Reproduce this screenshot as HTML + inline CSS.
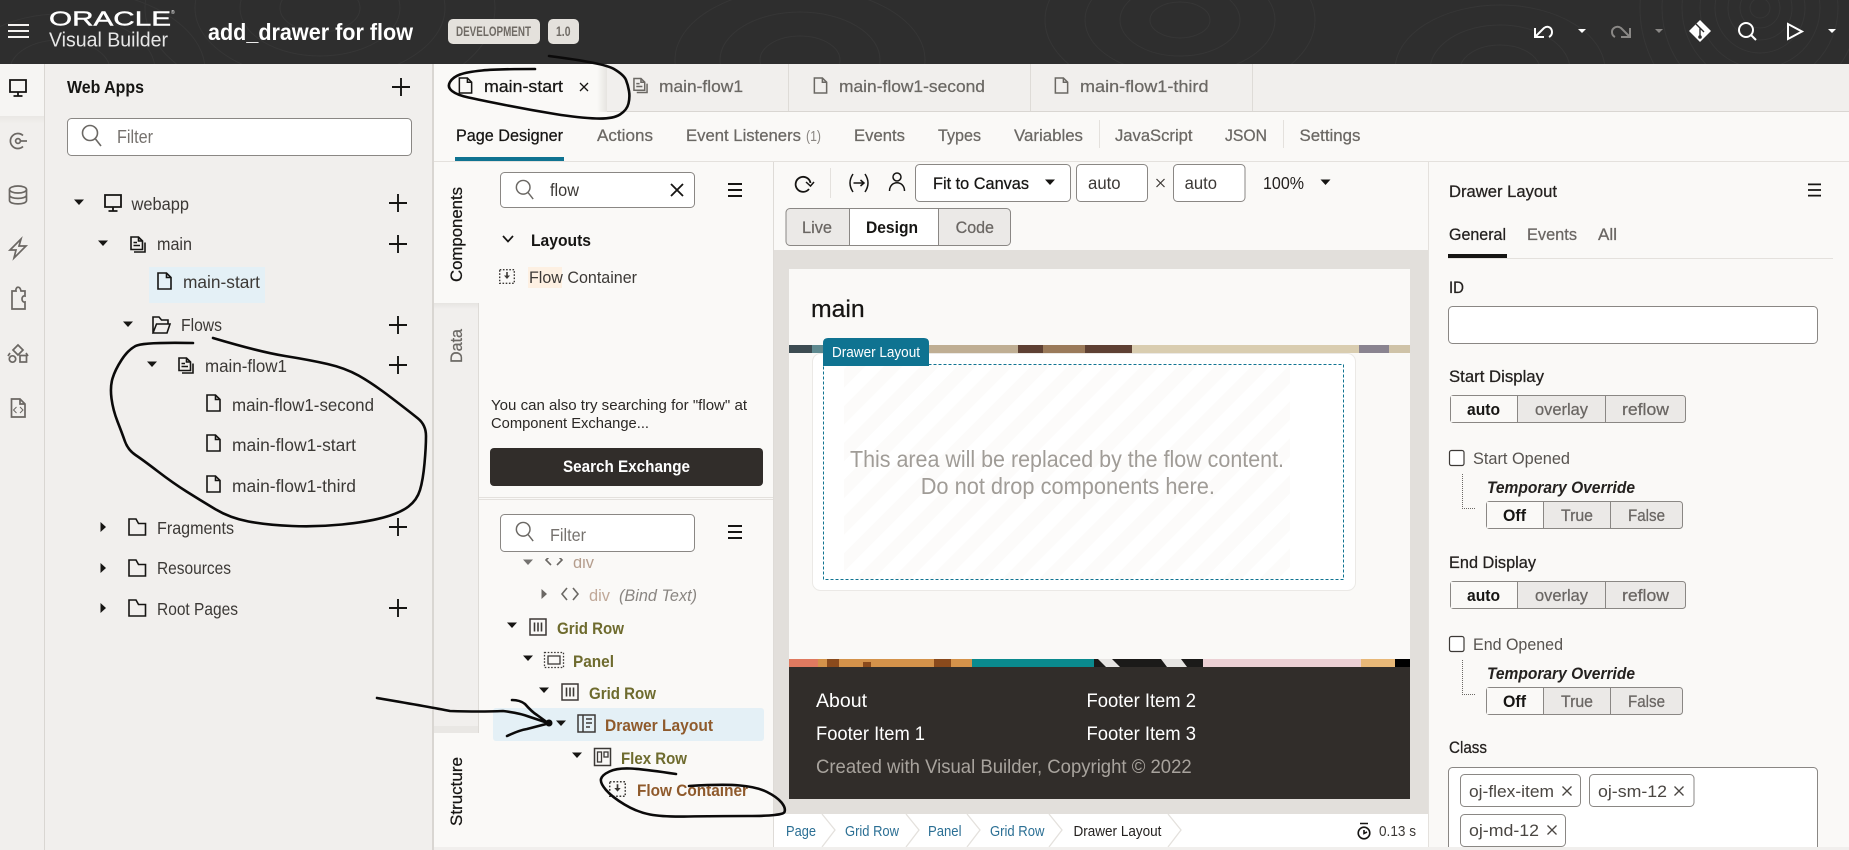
<!DOCTYPE html>
<html lang="en">
<head>
<meta charset="utf-8">
<title>add_drawer for flow - Oracle Visual Builder</title>
<style>
html,body{margin:0;padding:0;width:1849px;height:850px;overflow:hidden;background:#f1efed}
svg{display:block}
text{font-family:"Liberation Sans",sans-serif;white-space:pre;fill:#2b2825}
.b{font-weight:bold}
.m{stroke:currentColor;stroke-width:.25}
.tree{font-size:17.5px;fill:#3c3936}
.sub{font-size:17px;fill:#6b6864;color:#6b6864}
.tab{font-size:17px;fill:#6b6864;color:#6b6864}
.lab{font-size:16.5px;fill:#24211f;color:#24211f}
.seg{font-size:16.500px;fill:#6a6663;color:#6a6663}
.on{font-size:16.500px;fill:#161513;font-weight:bold}
.crumb{font-size:15px;fill:#2b6f94}
.olive{font-size:17px;font-weight:bold;fill:#6e6b2e}
.brown{font-size:17px;font-weight:bold;fill:#8f5a2c}
.foot{font-size:19.500px;fill:#fff}
.ink{fill:none;stroke:#0b0a0a;stroke-width:2.6;stroke-linecap:round;stroke-linejoin:round}
</style>
</head>
<body>
<svg xmlns="http://www.w3.org/2000/svg" width="1849" height="850" viewBox="0 0 1849 850">
<defs>
  <clipPath id="hc"><rect width="1849" height="64"/></clipPath>
  <clipPath id="treeclip"><rect x="478" y="558" width="295" height="289"/></clipPath>
  <clipPath id="classclip"><rect x="1440" y="760" width="400" height="87"/></clipPath>
  <linearGradient id="sh" x1="0" x2="1" y1="0" y2="0"><stop offset="0" stop-color="#faf9f7"/><stop offset="1" stop-color="#e6e4e0"/></linearGradient>
  <linearGradient id="shd" x1="0" x2="0" y1="0" y2="1"><stop offset="0" stop-color="#e6e4e1"/><stop offset="1" stop-color="#f1efed"/></linearGradient>
  <pattern id="hatch" width="26" height="26" patternUnits="userSpaceOnUse" patternTransform="rotate(-45)">
    <rect width="26" height="26" fill="#fff"/><rect width="26" height="13" fill="#fcfbfa"/>
  </pattern>
  <symbol id="doc" viewBox="0 0 15 18" overflow="visible"><path d="M1 1H9.5L14 5.5V17H1Z M9.5 1V5.5H14" fill="none" stroke="currentColor" stroke-width="1.6"/></symbol>
  <symbol id="pages" viewBox="0 0 16 17" overflow="visible"><path d="M1 1H8.5L12.5 5V13.5H1Z M8.5 1V5H12.5 M3.5 6.5H7 M3.5 9.5H10 M15 6.5V16H4" fill="none" stroke="currentColor" stroke-width="1.6"/></symbol>
  <symbol id="folder" viewBox="0 0 18 18" overflow="visible"><path d="M1 1H8L10.5 5.5H17.5V17H1Z" fill="none" stroke="currentColor" stroke-width="1.6"/></symbol>
  <symbol id="folderopen" viewBox="0 0 18 18" overflow="visible"><path d="M1 17V1H7L9.5 4H16V8 M1 17L4.500 8H18L15 17Z" fill="none" stroke="currentColor" stroke-width="1.6"/></symbol>
  <symbol id="mon" viewBox="0 0 18 18" overflow="visible"><path d="M1 1H17V13H1Z M9 13V17 M4.5 17H13.5" fill="none" stroke="currentColor" stroke-width="1.8"/></symbol>
  <symbol id="plus" viewBox="-10 -10 20 20" overflow="visible"><path d="M-9 0H9 M0 -9V9" fill="none" stroke="#161513" stroke-width="1.9"/></symbol>
  <symbol id="dn" viewBox="-5 -3 10 6" overflow="visible"><path d="M-5 -2.5H5L0 3Z" fill="currentColor"/></symbol>
  <symbol id="rt" viewBox="-3 -5 6 10" overflow="visible"><path d="M-2.5 -5V5L3 0Z" fill="currentColor"/></symbol>
  <symbol id="srch" viewBox="0 0 22 24" overflow="visible"><circle cx="9" cy="9" r="7.5" fill="none" stroke="#6b6864" stroke-width="1.6"/><path d="M14.500 15L20 22" stroke="#6b6864" stroke-width="1.6" fill="none"/></symbol>
  <symbol id="burger" viewBox="0 0 14 14" overflow="visible"><path d="M0 1H14 M0 7H14 M0 13H14" stroke="#161513" stroke-width="1.9" fill="none"/></symbol>
  <symbol id="gridi" viewBox="0 0 18 18" overflow="visible"><path d="M1 1H17V17H1Z" fill="none" stroke="#3c3936" stroke-width="1.5"/><path d="M5.500 4.500V13.500 M9 4.500V13.500 M12.500 4.500V13.500" stroke="#3c3936" stroke-width="1.6" fill="none"/></symbol>
  <symbol id="flowi" viewBox="0 0 16 15" overflow="visible"><rect x=".7" y=".7" width="14.6" height="13.6" fill="none" stroke="#3c3936" stroke-width="1.4" stroke-dasharray="1.6 1.6"/><path d="M8 3V7" stroke="#3c3936" stroke-width="1.6"/><path d="M5 6.500H11L8 10Z" fill="#3c3936"/></symbol>
</defs>

<!-- base -->
<rect width="1849" height="850" fill="#f1efed"/>

<!-- HEADER -->
<g clip-path="url(#hc)">
  <rect width="1849" height="64" fill="#2e2e2e"/>
  <g fill="none" stroke="#363636" stroke-width="1">
    <circle cx="1760" cy="8" r="10"/><circle cx="1760" cy="8" r="20"/><circle cx="1760" cy="8" r="32"/><circle cx="1760" cy="8" r="45"/><circle cx="1760" cy="8" r="60"/><circle cx="1760" cy="8" r="78"/><circle cx="1760" cy="8" r="98"/><circle cx="1760" cy="8" r="120"/>
    <ellipse cx="1500" cy="70" rx="40" ry="25"/><ellipse cx="1500" cy="70" rx="70" ry="45"/><ellipse cx="1500" cy="70" rx="105" ry="65"/>
    <ellipse cx="1180" cy="20" rx="30" ry="18"/><ellipse cx="1180" cy="20" rx="60" ry="36"/><ellipse cx="1180" cy="20" rx="95" ry="55"/><ellipse cx="1180" cy="20" rx="135" ry="78"/>
    <ellipse cx="800" cy="60" rx="40" ry="24"/><ellipse cx="800" cy="60" rx="80" ry="48"/><ellipse cx="800" cy="60" rx="125" ry="72"/>
    <ellipse cx="320" cy="8" rx="40" ry="24"/><ellipse cx="320" cy="8" rx="80" ry="48"/><ellipse cx="320" cy="8" rx="125" ry="72"/><ellipse cx="320" cy="8" rx="175" ry="98"/>
    <ellipse cx="60" cy="70" rx="50" ry="30"/><ellipse cx="60" cy="70" rx="95" ry="56"/><ellipse cx="60" cy="70" rx="145" ry="82"/>
  </g>
</g>
<path d="M8 25H29 M8 31H29 M8 37H29" stroke="#f4f2f0" stroke-width="2" fill="none"/>
<text x="49" y="25.500" font-size="20" textLength="122" lengthAdjust="spacingAndGlyphs" style="fill:#fff;stroke:#fff;stroke-width:.4">ORACLE</text>
<text x="171" y="14" font-size="5" style="fill:#fff">®</text>
<text x="49" y="46.500" font-size="20.500" textLength="119" lengthAdjust="spacingAndGlyphs" style="fill:#e6e6e6">Visual Builder</text>
<text x="208" y="40" font-size="23.500" class="b" textLength="205" lengthAdjust="spacingAndGlyphs" style="fill:#fff">add_drawer for flow</text>
<rect x="448" y="19" width="92" height="25" rx="5" fill="#e4e1dc"/>
<text x="456" y="36" font-size="13.500" class="b" textLength="75" lengthAdjust="spacingAndGlyphs" style="fill:#6f6a64">DEVELOPMENT</text>
<rect x="548" y="19" width="31" height="25" rx="5" fill="#e4e1dc"/>
<text x="556" y="36" font-size="13.500" class="b" textLength="14.500" lengthAdjust="spacingAndGlyphs" style="fill:#6f6a64">1.0</text>
<!-- header right icons -->
<g fill="none" stroke="#fff" stroke-width="2">
  <path d="M1535 28V37H1544 M1535 37L1544 28C1548 25 1552 28 1552 32C1552 34 1551 36 1549 37"/>
  <g stroke="#8a8886"><path d="M1630 28V37H1621 M1630 37L1621 28C1617 25 1612 28 1612 32C1612 34 1613 36 1615 37"/></g>
  <circle cx="1746" cy="30" r="7"/><path d="M1751 35L1756 40"/>
  <path d="M1788 24V39L1802 31.500Z"/>
</g>
<path d="M1578 29H1586L1582 33Z" fill="#fff"/>
<path d="M1655 29H1663L1659 33Z" fill="#8a8886"/>
<path d="M1828 29H1836L1832 33Z" fill="#fff"/>
<path d="M1700 20L1711 31L1700 42L1689 31Z" fill="#fff"/>
<path d="M1696 24L1700 28V37 M1700 28L1704 32" stroke="#2e2e2e" stroke-width="1.400" fill="none"/>
<circle cx="1700" cy="37" r="1.800" fill="#2e2e2e"/>

<!-- LEFT RAIL -->
<rect x="0" y="64" width="44" height="52" fill="#f6f5f3"/>
<rect x="0" y="116" width="44" height="8" fill="url(#shd)" opacity=".7"/>
<rect x="44" y="64" width="1" height="786" fill="#d9d6d2"/>
<g color="#161513"><use href="#mon" x="9" y="79" width="18" height="18"/></g>
<g fill="none" stroke="#6b6763" stroke-width="1.700">
  <path d="M23 135.500A7.500 7.500 0 1 0 23 146.500"/><circle cx="18" cy="141" r="2.400"/><path d="M20.500 141H27"/>
  <ellipse cx="18" cy="189.500" rx="8.500" ry="3.500"/><path d="M9.500 189.500V200.500C9.500 205 26.500 205 26.500 200.500V189.500 M9.500 195C9.500 199.500 26.500 199.500 26.500 195"/>
  <path d="M21 239L10 250H16L14 258L26 246H19Z"/>
  <path d="M12 291H16C15 287 20 285 21 291H25V296C21 295 21 303 25 302V309H12Z"/>
  <path d="M18 345L23 350L18 355L13 350Z M10 353L8 356 M26 353L28 356"/>
  <circle cx="12.500" cy="359" r="3.200"/><rect x="20" y="355.500" width="6.500" height="6.500"/>
  <path d="M11.500 399H20L25 404V417H11.500Z M20 399V404H25"/>
</g>
<path d="M16.500 407L13.500 410L16.500 413 M20 407L23 410L20 413" fill="none" stroke="#6b6763" stroke-width="1"/>

<!-- WEB APPS PANEL -->
<rect x="432" y="64" width="2" height="786" fill="#d9d6d2"/>
<text x="67" y="93" font-size="17.500" class="b" textLength="77" lengthAdjust="spacingAndGlyphs" style="fill:#161513">Web Apps</text>
<use href="#plus" x="391" y="77" width="20" height="20"/>
<rect x="67.500" y="118.500" width="344" height="37" rx="4" fill="#fff" stroke="#8a8784"/>
<use href="#srch" x="81" y="124" width="22" height="24"/>
<text x="117" y="143" font-size="18" textLength="36" lengthAdjust="spacingAndGlyphs" style="fill:#76726e">Filter</text>

<!-- tree -->
<g color="#161513">
  <use href="#dn" x="74" y="199" width="10" height="6"/>
  <use href="#dn" x="98" y="240" width="10" height="6"/>
  <use href="#dn" x="123" y="321" width="10" height="6"/>
  <use href="#dn" x="147" y="361" width="10" height="6"/>
  <use href="#rt" x="100" y="522" width="6" height="10"/>
  <use href="#rt" x="100" y="563" width="6" height="10"/>
  <use href="#rt" x="100" y="603" width="6" height="10"/>
  <use href="#mon" x="104" y="194" width="18" height="18"/>
  <use href="#pages" x="130" y="236" width="16" height="17"/>
  <rect x="149" y="267" width="116" height="36" fill="#e4f0f6"/>
  <use href="#doc" x="157" y="272" width="15" height="18"/>
  <use href="#folderopen" x="152" y="316" width="18" height="18"/>
  <use href="#pages" x="178" y="357" width="16" height="17"/>
  <use href="#doc" x="206" y="394" width="15" height="18"/>
  <use href="#doc" x="206" y="434" width="15" height="18"/>
  <use href="#doc" x="206" y="475" width="15" height="18"/>
  <use href="#folder" x="128" y="518" width="18" height="18"/>
  <use href="#folder" x="128" y="559" width="18" height="18"/>
  <use href="#folder" x="128" y="599" width="18" height="18"/>
</g>
<text class="tree" x="131.500" y="210" textLength="57.500" lengthAdjust="spacingAndGlyphs">webapp</text>
<text class="tree" x="157" y="250" textLength="35" lengthAdjust="spacingAndGlyphs">main</text>
<text class="tree" x="183" y="288" textLength="77" lengthAdjust="spacingAndGlyphs">main-start</text>
<text class="tree" x="181" y="331" textLength="41" lengthAdjust="spacingAndGlyphs">Flows</text>
<text class="tree" x="205" y="372" textLength="82" lengthAdjust="spacingAndGlyphs">main-flow1</text>
<text class="tree" x="232" y="411" textLength="142" lengthAdjust="spacingAndGlyphs">main-flow1-second</text>
<text class="tree" x="232" y="451" textLength="124" lengthAdjust="spacingAndGlyphs">main-flow1-start</text>
<text class="tree" x="232" y="492" textLength="124" lengthAdjust="spacingAndGlyphs">main-flow1-third</text>
<text class="tree" x="157" y="534" textLength="77" lengthAdjust="spacingAndGlyphs">Fragments</text>
<text class="tree" x="157" y="574" textLength="74" lengthAdjust="spacingAndGlyphs">Resources</text>
<text class="tree" x="157" y="615" textLength="81" lengthAdjust="spacingAndGlyphs">Root Pages</text>
<use href="#plus" x="388" y="193" width="20" height="20"/>
<use href="#plus" x="388" y="234" width="20" height="20"/>
<use href="#plus" x="388" y="315" width="20" height="20"/>
<use href="#plus" x="388" y="355" width="20" height="20"/>
<use href="#plus" x="388" y="517" width="20" height="20"/>
<use href="#plus" x="388" y="598" width="20" height="20"/>

<!-- TABS -->
<rect x="434" y="64" width="1415" height="47" fill="#f1efed"/>
<rect x="434" y="64" width="173" height="48" fill="#faf9f7"/>
<rect x="597" y="64" width="10" height="48" fill="url(#sh)"/>
<rect x="607" y="111" width="1242" height="1" fill="#d9d6d2"/>
<rect x="788" y="64" width="1" height="47" fill="#dedbd7"/>
<rect x="1030" y="64" width="1" height="47" fill="#dedbd7"/>
<rect x="1252" y="64" width="1" height="47" fill="#dedbd7"/>
<g color="#161513"><use href="#doc" x="458" y="77" width="15" height="17"/></g>
<text x="484" y="92" font-size="17" class="m" textLength="79" lengthAdjust="spacingAndGlyphs" style="fill:#161513;color:#161513">main-start</text>
<path d="M580 83L588 91 M588 83L580 91" stroke="#161513" stroke-width="1.300"/>
<g color="#6b6864">
  <use href="#pages" x="633" y="77" width="15" height="17"/>
  <use href="#doc" x="813" y="77" width="15" height="17"/>
  <use href="#doc" x="1054" y="77" width="15" height="17"/>
</g>
<text class="tab m" x="659" y="92" textLength="84" lengthAdjust="spacingAndGlyphs">main-flow1</text>
<text class="tab m" x="839" y="92" textLength="146" lengthAdjust="spacingAndGlyphs">main-flow1-second</text>
<text class="tab m" x="1080" y="92" textLength="128.500" lengthAdjust="spacingAndGlyphs">main-flow1-third</text>

<!-- SUBTABS -->
<rect x="434" y="112" width="1415" height="50" fill="#faf9f7"/>
<rect x="434" y="161" width="1415" height="1" fill="#e4e1dd"/>
<rect x="455" y="157" width="109" height="4" fill="#0f7391"/>
<text x="456" y="141" font-size="17" class="m" textLength="107" lengthAdjust="spacingAndGlyphs" style="fill:#161513;color:#161513">Page Designer</text>
<text class="sub m" x="597" y="141" textLength="56" lengthAdjust="spacingAndGlyphs">Actions</text>
<text class="sub m" x="686" y="141" textLength="115" lengthAdjust="spacingAndGlyphs">Event Listeners</text>
<text x="806" y="141" font-size="14.500" textLength="15" lengthAdjust="spacingAndGlyphs" style="fill:#8a8682">(1)</text>
<text class="sub m" x="854" y="141" textLength="51" lengthAdjust="spacingAndGlyphs">Events</text>
<text class="sub m" x="938" y="141" textLength="43" lengthAdjust="spacingAndGlyphs">Types</text>
<text class="sub m" x="1014" y="141" textLength="69" lengthAdjust="spacingAndGlyphs">Variables</text>
<text class="sub m" x="1115" y="141" textLength="77.500" lengthAdjust="spacingAndGlyphs">JavaScript</text>
<text class="sub m" x="1225" y="141" textLength="42" lengthAdjust="spacingAndGlyphs">JSON</text>
<text class="sub m" x="1299.500" y="141" textLength="61" lengthAdjust="spacingAndGlyphs">Settings</text>
<rect x="1099" y="120" width="1" height="28" fill="#e4e1dd"/>
<rect x="1283" y="120" width="1" height="28" fill="#e4e1dd"/>

<!-- VERTICAL TABS -->
<rect x="434" y="162" width="45" height="141" fill="#faf9f7"/>
<rect x="434" y="303" width="45" height="430" fill="#f1efed"/>
<rect x="434" y="303" width="45" height="6" fill="url(#shd)"/>
<rect x="434" y="726" width="45" height="7" fill="#e9e7e4"/>
<rect x="434" y="733" width="45" height="114" fill="#faf9f7"/>
<rect x="478" y="303" width="1" height="430" fill="#dedbd7"/>
<text transform="translate(462,282) rotate(-90)" font-size="17" class="m" textLength="95" lengthAdjust="spacingAndGlyphs" style="fill:#161513;color:#161513">Components</text>
<text transform="translate(462,363) rotate(-90)" font-size="17" class="m" textLength="34" lengthAdjust="spacingAndGlyphs" style="fill:#6b6864;color:#6b6864">Data</text>
<text transform="translate(462,826) rotate(-90)" font-size="17" class="m" textLength="69" lengthAdjust="spacingAndGlyphs" style="fill:#161513;color:#161513">Structure</text>

<!-- COMPONENTS PANEL -->
<rect x="479" y="162" width="294" height="685" fill="#faf9f7"/>
<rect x="773" y="162" width="1" height="685" fill="#dedbd7"/>
<rect x="500.500" y="172.500" width="194" height="35" rx="4" fill="#fff" stroke="#8a8784"/>
<use href="#srch" x="515" y="179" width="20" height="22"/>
<text x="550" y="196" font-size="17.500" textLength="29" lengthAdjust="spacingAndGlyphs" style="fill:#3c3936">flow</text>
<path d="M671 184L683 196 M683 184L671 196" stroke="#161513" stroke-width="1.800"/>
<use href="#burger" x="728" y="183" width="14" height="14"/>
<path d="M503 236L508 241.500L513 236" fill="none" stroke="#161513" stroke-width="1.700"/>
<text x="531" y="246" font-size="17" class="b" textLength="60" lengthAdjust="spacingAndGlyphs" style="fill:#161513">Layouts</text>
<use href="#flowi" x="499" y="269" width="16" height="15"/>
<rect x="528" y="267" width="34" height="21" fill="#fdf0e2"/>
<text x="529" y="283" font-size="17" textLength="108" lengthAdjust="spacingAndGlyphs" style="fill:#3c3936">Flow Container</text>
<text x="491" y="410" font-size="15" textLength="256" lengthAdjust="spacingAndGlyphs">You can also try searching for "flow" at</text>
<text x="491" y="428" font-size="15" textLength="158" lengthAdjust="spacingAndGlyphs">Component Exchange...</text>
<rect x="490" y="448" width="273" height="38" rx="4" fill="#312d2a"/>
<text x="563" y="472" font-size="17" class="b" textLength="127" lengthAdjust="spacingAndGlyphs" style="fill:#fff">Search Exchange</text>
<rect x="479" y="497" width="294" height="1" fill="#e4e1dd"/>
<rect x="479" y="499" width="294" height="1" fill="#e4e1dd"/>
<g clip-path="url(#treeclip)">
  <g color="#3c3936"><use href="#dn" x="523" y="559" width="10" height="6" opacity=".7"/></g>
  <path d="M551 555L546 560L551 565 M557 555L562 560L557 565" fill="none" stroke="#6b6864" stroke-width="1.600"/>
  <text x="573" y="568" font-size="17" textLength="21" lengthAdjust="spacingAndGlyphs" style="fill:#b59e8e">div</text>
</g>
<rect x="500.500" y="514.500" width="194" height="37" rx="4" fill="#fff" stroke="#8a8784"/>
<use href="#srch" x="515" y="521" width="20" height="22"/>
<text x="550" y="541" font-size="17.500" textLength="36" lengthAdjust="spacingAndGlyphs" style="fill:#76726e">Filter</text>
<use href="#burger" x="728" y="525" width="14" height="14"/>
<!-- structure tree -->
<rect x="493" y="708" width="271" height="33" rx="3" fill="#e4f0f6"/>
<g color="#161513">
  <g color="#6b6864"><use href="#rt" x="541" y="589" width="6" height="10"/></g>
  <use href="#dn" x="507" y="622" width="10" height="6"/>
  <use href="#dn" x="523" y="655" width="10" height="6"/>
  <use href="#dn" x="539" y="687" width="10" height="6"/>
  <use href="#dn" x="556" y="720" width="10" height="6"/>
  <use href="#dn" x="572" y="752" width="10" height="6"/>
</g>
<path d="M567 588L562 594L567 600 M573 588L578 594L573 600" fill="none" stroke="#6b6864" stroke-width="1.600"/>
<text x="589" y="601" font-size="17" textLength="21" lengthAdjust="spacingAndGlyphs" style="fill:#c0a898">div</text>
<text x="619" y="601" font-size="17" font-style="italic" textLength="78" lengthAdjust="spacingAndGlyphs" style="fill:#8a8682">(Bind Text)</text>
<use href="#gridi" x="529" y="618" width="18" height="18"/>
<text class="olive" x="557" y="634" textLength="67" lengthAdjust="spacingAndGlyphs">Grid Row</text>
<rect x="544.500" y="652.500" width="19" height="15" fill="none" stroke="#3c3936" stroke-width="1.300" stroke-dasharray="1.600 1.600"/>
<rect x="548" y="656" width="12" height="8" fill="none" stroke="#3c3936" stroke-width="1.300"/>
<text class="olive" x="573" y="667" textLength="41" lengthAdjust="spacingAndGlyphs">Panel</text>
<use href="#gridi" x="561" y="683" width="18" height="18"/>
<text class="olive" x="589" y="699" textLength="67" lengthAdjust="spacingAndGlyphs">Grid Row</text>
<path d="M578 715H595V732H578Z M583 715V732 M586 719H592 M586 723H592 M586 727H590" fill="none" stroke="#3c3936" stroke-width="1.500"/>
<text class="brown" x="605" y="731" textLength="108" lengthAdjust="spacingAndGlyphs">Drawer Layout</text>
<path d="M594.500 748.500H610.500V765.500H594.500Z" fill="none" stroke="#3c3936" stroke-width="1.500"/>
<rect x="597.500" y="752" width="4" height="10" fill="none" stroke="#3c3936" stroke-width="1.300"/>
<rect x="604" y="752" width="4" height="5" fill="none" stroke="#3c3936" stroke-width="1.300"/>
<text class="olive" x="621" y="764" textLength="66" lengthAdjust="spacingAndGlyphs">Flex Row</text>
<use href="#flowi" x="609" y="781" width="17" height="16"/>
<text class="brown" x="637" y="796" textLength="111" lengthAdjust="spacingAndGlyphs">Flow Container</text>

<!-- TOOLBAR -->
<rect x="774" y="162" width="654" height="88" fill="#faf9f7"/>
<g fill="none" stroke="#161513" stroke-width="1.800">
  <path d="M809 189A7.500 7.500 0 1 1 810.500 183"/>
  <path d="M806 182L810.500 186L814 182" stroke-width="1.500"/>
  <path d="M853 174C849 180 849 186 853 192 M865 174C869 180 869 186 865 192" stroke-width="1.500"/>
  <path d="M853.500 183H864 M860.500 180L864 183L860.500 186" stroke-width="1.500"/>
  <circle cx="897" cy="177" r="4" stroke-width="1.500"/>
  <path d="M889.500 191C889.500 180 904.500 180 904.500 191" stroke-width="1.500"/>
</g>
<rect x="830" y="168" width="1" height="30" fill="#e4e1dd"/>
<rect x="915.500" y="164.500" width="155" height="37" rx="4" fill="#fff" stroke="#8a8784"/>
<text x="933" y="189" font-size="17" class="m" textLength="96" lengthAdjust="spacingAndGlyphs" style="fill:#161513;color:#161513">Fit to Canvas</text>
<path d="M1045 179.500H1055L1050 185Z" fill="#161513"/>
<rect x="1076.500" y="164.500" width="71" height="37" rx="4" fill="#fff" stroke="#8a8784"/>
<text x="1088" y="189" font-size="17.500" textLength="32.600" lengthAdjust="spacingAndGlyphs" style="fill:#3c3936">auto</text>
<path d="M1156.500 179L1164.500 187 M1164.500 179L1156.500 187" stroke="#3c3936" stroke-width="1.200"/>
<rect x="1173.500" y="164.500" width="71.500" height="37" rx="4" fill="#fff" stroke="#8a8784"/>
<text x="1184.600" y="189" font-size="17.500" textLength="32.400" lengthAdjust="spacingAndGlyphs" style="fill:#3c3936">auto</text>
<text x="1263" y="189" font-size="17.500" textLength="41" lengthAdjust="spacingAndGlyphs" style="fill:#24211f">100%</text>
<path d="M1320.500 179.500H1330.500L1325.500 185Z" fill="#161513"/>
<!-- Live/Design/Code -->
<rect x="786" y="208.500" width="224.500" height="37" rx="4" fill="#ebe9e7" stroke="#8a8784"/>
<rect x="849.500" y="209" width="89" height="36" fill="#fff"/>
<path d="M849.500 208.500V245.500 M938.500 208.500V245.500" stroke="#8a8784" fill="none"/>
<text x="802" y="233" font-size="17" class="m" textLength="30" lengthAdjust="spacingAndGlyphs" style="fill:#6a6663;color:#6a6663">Live</text>
<text x="866" y="233" font-size="17" class="b" textLength="52" lengthAdjust="spacingAndGlyphs" style="fill:#161513">Design</text>
<text x="955.600" y="233" font-size="17" class="m" textLength="38.400" lengthAdjust="spacingAndGlyphs" style="fill:#6a6663;color:#6a6663">Code</text>

<!-- CANVAS -->
<rect x="774" y="250" width="654" height="564" fill="#e2dfdb"/>
<rect x="789" y="269" width="621" height="398" fill="#faf9f7"/>
<text x="811" y="317" font-size="24" class="m" textLength="53.700" lengthAdjust="spacingAndGlyphs" style="fill:#161513;color:#161513">main</text>
<!-- upper banner -->
<rect x="789" y="345" width="23" height="8" fill="#3d4c52"/>
<rect x="812" y="345" width="11" height="8" fill="#5f8a90"/>
<rect x="929" y="345" width="89" height="8" fill="#bfae93"/>
<rect x="1018" y="345" width="25" height="8" fill="#5e4033"/>
<rect x="1043" y="345" width="42" height="8" fill="#9a7a5a"/>
<rect x="1085" y="345" width="47" height="8" fill="#5e4033"/>
<rect x="1132" y="345" width="227" height="8" fill="#d9cdb0"/>
<rect x="1359" y="345" width="30" height="8" fill="#8a8490"/>
<rect x="1389" y="345" width="21" height="8" fill="#cfc3a8"/>
<!-- drawer card -->
<rect x="812.500" y="353.500" width="543" height="237" rx="8" fill="#fff" stroke="#ebe9e6"/>
<rect x="844" y="364" width="446" height="215" fill="url(#hatch)"/>
<rect x="823.500" y="364.500" width="520" height="215" fill="none" stroke="#0f7391" stroke-dasharray="3 2"/>
<path d="M823 366V343Q823 338 828 338H924Q929 338 929 343V366Z" fill="#0f7391"/>
<text x="832" y="357" font-size="14.500" textLength="88" lengthAdjust="spacingAndGlyphs" style="fill:#fff">Drawer Layout</text>
<text x="850" y="467" font-size="23" textLength="434" lengthAdjust="spacingAndGlyphs" style="fill:#a09c97">This area will be replaced by the flow content.</text>
<text x="920.700" y="494" font-size="23" textLength="294.300" lengthAdjust="spacingAndGlyphs" style="fill:#a09c97">Do not drop components here.</text>
<!-- lower banner -->
<rect x="789" y="659" width="29" height="8" fill="#e07a60"/>
<rect x="818" y="659" width="154" height="8" fill="#d4924a"/>
<rect x="827" y="659" width="12" height="8" fill="#8a4a1c"/>
<rect x="863" y="662" width="8" height="5" fill="#8a4a1c"/>
<rect x="934" y="659" width="17" height="8" fill="#8a4a1c"/>
<rect x="972" y="659" width="122" height="8" fill="#0a8a8e"/>
<rect x="1094" y="659" width="109" height="8" fill="#1b1a19"/>
<path d="M1098 659H1112L1120 667H1106Z M1161 659H1181L1187 667H1167Z" fill="#e6e4e2"/>
<rect x="1203" y="659" width="158" height="8" fill="#ecd0d4"/>
<rect x="1361" y="659" width="34" height="8" fill="#e8b878"/>
<rect x="1395" y="659" width="15" height="8" fill="#000"/>
<!-- footer -->
<rect x="789" y="667" width="621" height="132" fill="#312d2a"/>
<text class="foot" x="816" y="707" textLength="51" lengthAdjust="spacingAndGlyphs">About</text>
<text class="foot" x="816" y="740" textLength="109" lengthAdjust="spacingAndGlyphs">Footer Item 1</text>
<text class="foot" x="1086.500" y="707" textLength="109.500" lengthAdjust="spacingAndGlyphs">Footer Item 2</text>
<text class="foot" x="1086.500" y="740" textLength="109.500" lengthAdjust="spacingAndGlyphs">Footer Item 3</text>
<text x="816" y="773" font-size="19.500" textLength="375.700" lengthAdjust="spacingAndGlyphs" style="fill:#a8a39d">Created with Visual Builder, Copyright © 2022</text>

<!-- BREADCRUMB -->
<rect x="774" y="814" width="654" height="33" fill="#fff"/>
<g fill="none" stroke="#e4e1dd" stroke-width="1.300">
  <path d="M822 814L835 830L822 847 M906 814L919 830L906 847 M967 814L980 830L967 847 M1049 814L1062 830L1049 847 M1168 814L1181 830L1168 847"/>
</g>
<text class="crumb" x="786" y="836" textLength="30" lengthAdjust="spacingAndGlyphs">Page</text>
<text class="crumb" x="845" y="836" textLength="54" lengthAdjust="spacingAndGlyphs">Grid Row</text>
<text class="crumb" x="928" y="836" textLength="33.500" lengthAdjust="spacingAndGlyphs">Panel</text>
<text class="crumb" x="990" y="836" textLength="54.400" lengthAdjust="spacingAndGlyphs">Grid Row</text>
<text x="1073.500" y="836" font-size="15" textLength="87.900" lengthAdjust="spacingAndGlyphs" style="fill:#24211f">Drawer Layout</text>
<g fill="none" stroke="#161513" stroke-width="1.600"><circle cx="1364" cy="833" r="5.800"/><path d="M1360 823.500H1368 M1364 830V833.500L1367 832"/></g>
<text x="1379" y="836" font-size="15" textLength="37" lengthAdjust="spacingAndGlyphs" style="fill:#3c3936">0.13 s</text>

<!-- PROPERTY PANEL -->
<rect x="1428" y="162" width="421" height="685" fill="#faf9f7"/>
<rect x="1428" y="162" width="1" height="685" fill="#e4e1dd"/>
<text class="lab m" x="1449" y="197" textLength="108" lengthAdjust="spacingAndGlyphs">Drawer Layout</text>
<use href="#burger" x="1808" y="183" width="13" height="14"/>
<text class="lab m" x="1449" y="240" textLength="57" lengthAdjust="spacingAndGlyphs">General</text>
<text class="seg m" x="1527" y="240" textLength="50" lengthAdjust="spacingAndGlyphs">Events</text>
<text class="seg m" x="1598" y="240" textLength="19" lengthAdjust="spacingAndGlyphs">All</text>
<rect x="1448" y="258" width="385" height="1" fill="#e4e1dd"/>
<rect x="1448" y="254" width="59" height="4" fill="#161513"/>
<text class="lab m" x="1449" y="293" textLength="15" lengthAdjust="spacingAndGlyphs">ID</text>
<rect x="1448.500" y="306.500" width="369" height="37" rx="4" fill="#fff" stroke="#8a8784"/>
<text class="lab m" x="1449" y="382" textLength="95" lengthAdjust="spacingAndGlyphs">Start Display</text>
<!-- seg 1 -->
<rect x="1450.500" y="395.500" width="235" height="27" rx="3" fill="#ebe9e7" stroke="#8a8784"/>
<rect x="1451" y="396" width="66" height="26" fill="#faf9f7"/>
<path d="M1517.500 395.500V422.500 M1605.500 395.500V422.500" stroke="#8a8784" fill="none"/>
<text class="on" x="1467" y="415" textLength="33" lengthAdjust="spacingAndGlyphs">auto</text>
<text class="seg m" x="1535" y="415" textLength="53" lengthAdjust="spacingAndGlyphs">overlay</text>
<text class="seg m" x="1622" y="415" textLength="47" lengthAdjust="spacingAndGlyphs">reflow</text>
<rect x="1449.500" y="450.500" width="14.500" height="15" rx="2" fill="#fff" stroke="#3c3936" stroke-width="1.200"/>
<text x="1473" y="464" font-size="16.500" textLength="97" lengthAdjust="spacingAndGlyphs" style="fill:#57534f">Start Opened</text>
<path d="M1462.500 474V508.500H1476" fill="none" stroke="#6b6864" stroke-dasharray="1 1"/>
<text x="1487" y="493" font-size="16.500" font-weight="bold" font-style="italic" textLength="148" lengthAdjust="spacingAndGlyphs" style="fill:#24211f">Temporary Override</text>
<rect x="1486.500" y="501.500" width="196" height="27" rx="3" fill="#ebe9e7" stroke="#8a8784"/>
<rect x="1487" y="502" width="56" height="26" fill="#faf9f7"/>
<path d="M1543.500 501.500V528.500 M1610.500 501.500V528.500" stroke="#8a8784" fill="none"/>
<text class="on" x="1503" y="521" textLength="23" lengthAdjust="spacingAndGlyphs">Off</text>
<text class="seg m" x="1561" y="521" textLength="32" lengthAdjust="spacingAndGlyphs">True</text>
<text class="seg m" x="1628" y="521" textLength="37" lengthAdjust="spacingAndGlyphs">False</text>
<text class="lab m" x="1449" y="568" textLength="87" lengthAdjust="spacingAndGlyphs">End Display</text>
<!-- seg 2 -->
<rect x="1450.500" y="581.500" width="235" height="27" rx="3" fill="#ebe9e7" stroke="#8a8784"/>
<rect x="1451" y="582" width="66" height="26" fill="#faf9f7"/>
<path d="M1517.500 581.500V608.500 M1605.500 581.500V608.500" stroke="#8a8784" fill="none"/>
<text class="on" x="1467" y="601" textLength="33" lengthAdjust="spacingAndGlyphs">auto</text>
<text class="seg m" x="1535" y="601" textLength="53" lengthAdjust="spacingAndGlyphs">overlay</text>
<text class="seg m" x="1622" y="601" textLength="47" lengthAdjust="spacingAndGlyphs">reflow</text>
<rect x="1449.500" y="636.500" width="14.500" height="15" rx="2" fill="#fff" stroke="#3c3936" stroke-width="1.200"/>
<text x="1473" y="650" font-size="16.500" textLength="90" lengthAdjust="spacingAndGlyphs" style="fill:#57534f">End Opened</text>
<path d="M1462.500 660V694.500H1476" fill="none" stroke="#6b6864" stroke-dasharray="1 1"/>
<text x="1487" y="679" font-size="16.500" font-weight="bold" font-style="italic" textLength="148" lengthAdjust="spacingAndGlyphs" style="fill:#24211f">Temporary Override</text>
<rect x="1486.500" y="687.500" width="196" height="27" rx="3" fill="#ebe9e7" stroke="#8a8784"/>
<rect x="1487" y="688" width="56" height="26" fill="#faf9f7"/>
<path d="M1543.500 687.500V714.500 M1610.500 687.500V714.500" stroke="#8a8784" fill="none"/>
<text class="on" x="1503" y="707" textLength="23" lengthAdjust="spacingAndGlyphs">Off</text>
<text class="seg m" x="1561" y="707" textLength="32" lengthAdjust="spacingAndGlyphs">True</text>
<text class="seg m" x="1628" y="707" textLength="37" lengthAdjust="spacingAndGlyphs">False</text>
<text class="lab m" x="1449" y="753" textLength="38" lengthAdjust="spacingAndGlyphs">Class</text>
<g clip-path="url(#classclip)">
  <rect x="1448.500" y="767.500" width="369" height="100" rx="4" fill="#fff" stroke="#8a8784"/>
  <rect x="1460.500" y="774.500" width="120" height="32" rx="4" fill="#fff" stroke="#8a8784"/>
  <rect x="1589.500" y="774.500" width="104.500" height="32" rx="4" fill="#fff" stroke="#8a8784"/>
  <rect x="1460.500" y="814.500" width="105" height="32" rx="4" fill="#fff" stroke="#8a8784"/>
</g>
<text x="1469" y="797" font-size="16.500" textLength="85" lengthAdjust="spacingAndGlyphs" style="fill:#4a4642">oj-flex-item</text>
<text x="1598" y="797" font-size="16.500" textLength="69" lengthAdjust="spacingAndGlyphs" style="fill:#4a4642">oj-sm-12</text>
<text x="1469" y="836" font-size="16.500" textLength="70" lengthAdjust="spacingAndGlyphs" style="fill:#4a4642">oj-md-12</text>
<path d="M1562.500 786.500L1571.500 795.500 M1571.500 786.500L1562.500 795.500 M1674.500 786.500L1683.500 795.500 M1683.500 786.500L1674.500 795.500 M1547.500 825.500L1556.500 834.500 M1556.500 825.500L1547.500 834.500" stroke="#4a4642" stroke-width="1.300" fill="none"/>

<!-- bottom strip -->
<rect x="434" y="847" width="1415" height="3" fill="#f1efed"/>

<!-- HANDWRITTEN ANNOTATIONS -->
<path class="ink" d="M535 69Q497 69 482 70.500Q467 72 460 74.500Q453 77 450 82Q447 87 452 91Q457 95 468.500 97.500Q480 100 505 105Q530 110 555 114Q580 118 596.500 118.500Q613 119 620 114.500Q627 110 628.500 103.500Q630 97 629 91Q628 85 626 80Q624 75 614 69Q604 63 549 56"/>
<path class="ink" d="M193 343Q143 342 135.500 346Q128 350 121.500 360Q115 370 112.500 378.500Q110 387 111.500 398.500Q113 410 117.500 421.500Q122 433 125 441.500Q128 450 135.500 455Q143 460 158 471.500Q173 483 186.500 491.500Q200 500 215 509Q230 518 248.500 521.500Q267 525 292 526Q317 527 342 524.500Q367 522 383.500 517.500Q400 513 408.500 506.500Q417 500 420 490Q423 480 424.500 463.500Q426 447 426 436Q426 425 418 418.500Q410 412 391 397.500Q372 383 358.500 375.500Q345 368 327.500 364Q310 360 285 356Q260 352 213 338"/>
<path class="ink" d="M377 698Q430 707 450 711Q480 712 503 711Q520 713 530 717L548 723"/>
<path class="ink" d="M512 700Q520 700 525 704Q532 712 537 715L548 723"/>
<path class="ink" d="M507 736Q520 730 527 729L550 723"/>
<circle cx="549" cy="723" r="3.500" fill="#0b0a0a"/>
<path class="ink" d="M676 774Q643 769 630 768.500Q617 768 609.500 771.500Q602 775 601 779Q600 783 606 790Q612 797 624.500 804.500Q637 812 650 814.500Q663 817 688 816.500Q713 816 748 816Q783 816 784.500 812Q786 808 781.500 802.500Q777 797 767 792Q757 787 740 785.500Q723 784 689 786"/>
</svg>
</body>
</html>
